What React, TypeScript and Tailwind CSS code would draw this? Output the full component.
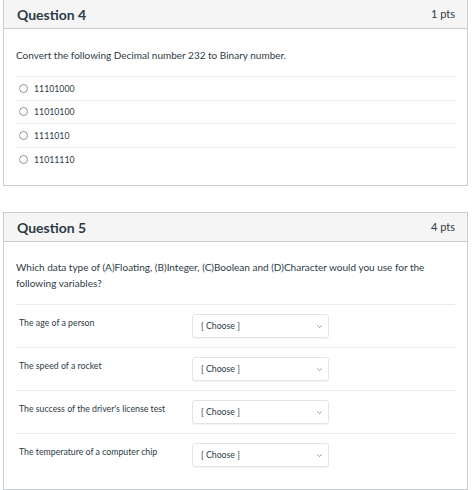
import * as React from "react";

const font = { fontFamily: "Lato, 'Noto Sans', sans-serif" };

function Header({ title, pts }: { title: string; pts: string }) {
  return (
    <div className="flex h-[29px] items-center justify-between border-b border-[#c7cdd1] bg-[#f5f5f5] pl-[13px] pr-[12px] text-[#2d3b45]">
      <span className="text-[14px] font-bold">{title}</span>
      <span className="text-[11px]">{pts}</span>
    </div>
  );
}

const options = ["11101000", "11010100", "1111010", "11011110"];

const rows = [
  "The age of a person",
  "The speed of a rocket",
  "The success of the driver's license test",
  "The temperature of a computer chip",
];

function Choose() {
  return (
    <div className="mt-[9px] flex h-[24px] w-[137px] items-center justify-between rounded-[3px] border border-[#e2e4e6] bg-white pl-[8px] pr-[5px] text-[8.75px] text-[#2d3b45] shadow-[0_1px_1px_rgba(0,0,0,0.05)]">
      <span>[ Choose ]</span>
      <svg width="7" height="7" viewBox="0 0 10 10" fill="none" stroke="#7b858c" strokeWidth="1.2">
        <path d="M2 3.5 L5 6.5 L8 3.5" />
      </svg>
    </div>
  );
}

export default function App() {
  return (
    <div className="min-h-[490px] w-[474px] bg-white pl-[3px] pr-[6px]" style={font}>
      {/* Question 4 */}
      <div className="h-[186px] border border-t-0 border-[#c7cdd1] bg-white">
        <Header title="Question 4" pts="1 pts" />
        <div className="px-[12px]">
          <p className="pt-[19px] text-[10px] text-[#2d3b45]">
            Convert the following Decimal number 232 to Binary number.
          </p>
          <div className="mt-[13px] border-t border-[#e8eaec]">
            {options.map((o, i) => (
              <div
                key={o}
                className={`flex h-[23.5px] items-center gap-[6px] pl-[2px] text-[8.75px] text-[#2d3b45] ${
                  i < options.length - 1 ? "border-b border-[#e8eaec]" : ""
                }`}
              >
                <span className="ml-[1px] inline-block h-[9px] w-[9px] rounded-full border border-[#8b969e] bg-white" />
                <span>{o}</span>
              </div>
            ))}
          </div>
        </div>
      </div>

      {/* Question 5 */}
      <div className="mt-[26px] h-[278px] border border-[#c7cdd1] bg-white">
        <Header title="Question 5" pts="4 pts" />
        <div className="px-[12px]">
          <p className="pt-[17px] text-[10px] leading-[16px] text-[#2d3b45]">
            Which data type of (A)Floating, (B)Integer, (C)Boolean and (D)Character would you use for the following variables?
          </p>
          <div className="mt-[13px]">
            {rows.map((r) => (
              <div key={r} className="flex h-[43px] items-start border-t border-[#e8eaec]">
                <span className="w-[176px] pl-[3px] pt-[11px] text-[8.75px] text-[#2d3b45]">{r}</span>
                <Choose />
              </div>
            ))}
          </div>
        </div>
      </div>
    </div>
  );
}
